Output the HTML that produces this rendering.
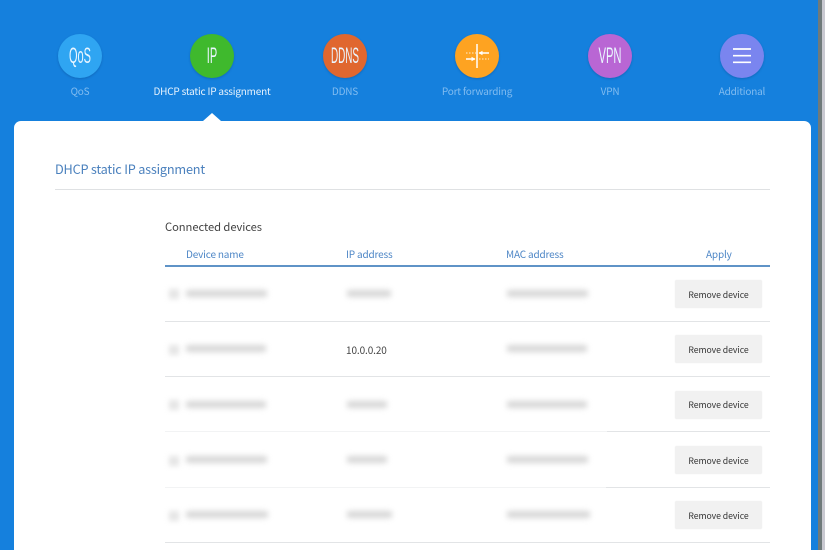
<!DOCTYPE html>
<html><head><meta charset="utf-8"><style>
html,body{margin:0;padding:0;width:825px;height:550px;overflow:hidden;background:#1580dd}
body{position:relative;font-family:"Noto Sans CJK JP","Liberation Sans",sans-serif;color:#444}
.a{position:absolute;white-space:nowrap;line-height:16px}
.c{position:absolute;width:44px;height:44px;top:34px;border-radius:50%;box-shadow:0 1px 2px rgba(0,40,90,.25);color:#fff;text-align:center;overflow:hidden}
.c span{display:block;font:22px/44px "Liberation Sans",sans-serif;transform-origin:center;margin:0 -30px;color:#eaf6ff}
.l{position:absolute;top:83px;width:200px;text-align:center;font-size:10px;letter-spacing:-.2px;line-height:15px;color:#82bcf0;white-space:nowrap}
.card{position:absolute;left:14px;top:121px;width:797px;height:440px;background:#fff;border-radius:7px 7px 0 0}
.tri{position:absolute;left:203px;top:113px;width:0;height:0;border-left:9px solid transparent;border-right:9px solid transparent;border-bottom:8px solid #fff}
.h{font-size:10px;letter-spacing:-.17px;color:#4d86c6}
.line{position:absolute;left:165px;width:605px;height:1px;background:#e2e4e6}
.btn{position:absolute;left:675px;width:87px;height:28px;background:#f1f1f1;border-radius:2px;font-size:8.7px;letter-spacing:-.05px;line-height:30px;text-align:center;color:#333;box-shadow:0 0 1px #e6e6e6}
.b{position:absolute;height:7px;background:#d6d6d6;filter:blur(3px);border-radius:2px}
.ic{position:absolute;left:169px;width:10px;height:10px;background:#e4e4e4;filter:blur(2.6px)}
</style></head><body>
<div class="c" style="left:58px;background:#2fa5f2"><span style="transform:scaleX(.5)">QoS</span></div>
<div class="c" style="left:190px;background:#3fb92d"><span style="transform:scaleX(.5)">IP</span></div>
<div class="c" style="left:323px;background:#e0672f"><span style="transform:scaleX(.45)">DDNS</span></div>
<div class="c" style="left:455px;background:#fea321">
<svg width="44" height="44" viewBox="0 0 44 44" style="display:block"><g fill="none" stroke="#fff"><path d="M22 10V34" stroke-width="1.5"/><path d="M24 19H34" stroke-width="1.4"/><path d="M11 25H20" stroke-width="1.4"/><path d="M11 19H21M24 25H34" stroke-width="1" stroke-dasharray="1.5 1.5" opacity=".8"/></g><path d="M23.500 19l4-2.200v4.400zM20.500 25l-4-2.200v4.400z" fill="#fff"/></svg></div>
<div class="c" style="left:588px;background:#b966d4"><span style="transform:scaleX(.51)">VPN</span></div>
<div class="c" style="left:720px;background:#7a85ef"><svg width="44" height="44" viewBox="0 0 44 44" style="display:block"><path d="M13 15H31M13 21.700H31M13 28.300H31" stroke="#fff" stroke-width="1.700"/></svg></div>
<div class="l" style="left:-20px">QoS</div>
<div class="l" style="left:112px;color:#e8f3fd">DHCP static IP assignment</div>
<div class="l" style="left:245px">DDNS</div>
<div class="l" style="left:377px">Port forwarding</div>
<div class="l" style="left:510px">VPN</div>
<div class="l" style="left:642px">Additional</div>
<div class="tri"></div>
<div class="card"></div>
<div class="a" style="left:55px;top:160px;font-size:12.700px;letter-spacing:-.2px;line-height:18px;color:#4a80bd">DHCP static IP assignment</div>
<div class="line" style="left:55px;width:715px;top:189px;height:1px;background:#dfe1e3"></div>
<div class="a" style="left:165px;top:219px;font-size:11.200px;letter-spacing:-.06px;color:#444">Connected devices</div>
<div class="a h" style="left:186px;top:246px">Device name</div>
<div class="a h" style="left:346px;top:246px">IP address</div>
<div class="a h" style="left:506px;top:246px">MAC address</div>
<div class="a h" style="left:706px;top:246px">Apply</div>
<div class="line" style="top:265px;height:2px;background:#5f93c7"></div>
<div class="line" style="top:321px"></div>
<div class="line" style="top:376px"></div>
<div class="line" style="top:431px;background:#f2f3f4"></div><div class="line" style="left:607px;width:163px;top:431px"></div>
<div class="line" style="top:487px;background:#f2f3f4"></div><div class="line" style="left:606px;width:164px;top:487px"></div>
<div class="line" style="top:542px"></div>

<div class="ic" style="top:289px"></div><div class="b" style="left:186px;top:290px;width:81px"></div><div class="b" style="left:347px;top:290px;width:44px"></div><div class="b" style="left:507px;top:290px;width:81px"></div>
<div class="ic" style="top:345px"></div><div class="b" style="left:186px;top:345px;width:80px"></div><div class="a" style="left:346px;top:342px;font-size:10px;letter-spacing:-.1px;color:#444">10.0.0.20</div><div class="b" style="left:507px;top:345px;width:80px"></div>
<div class="ic" style="top:400px"></div><div class="b" style="left:186px;top:401px;width:80px"></div><div class="b" style="left:347px;top:401px;width:40px"></div><div class="b" style="left:507px;top:401px;width:80px"></div>
<div class="ic" style="top:456px"></div><div class="b" style="left:186px;top:456px;width:81px"></div><div class="b" style="left:347px;top:456px;width:40px"></div><div class="b" style="left:507px;top:456px;width:81px"></div>
<div class="ic" style="top:511px"></div><div class="b" style="left:186px;top:511px;width:82px"></div><div class="b" style="left:347px;top:511px;width:45px"></div><div class="b" style="left:507px;top:511px;width:83px"></div>

<div class="btn" style="top:280px">Remove device</div>
<div class="btn" style="top:335px">Remove device</div>
<div class="btn" style="top:391px;line-height:28px">Remove device</div>
<div class="btn" style="top:446px">Remove device</div>
<div class="btn" style="top:501px">Remove device</div>
<div style="position:absolute;left:818px;top:0;width:4px;height:550px;background:#6f7a7a"></div>
<div style="position:absolute;left:822px;top:0;width:3px;height:550px;background:#c9c9d1"></div>
</body></html>
